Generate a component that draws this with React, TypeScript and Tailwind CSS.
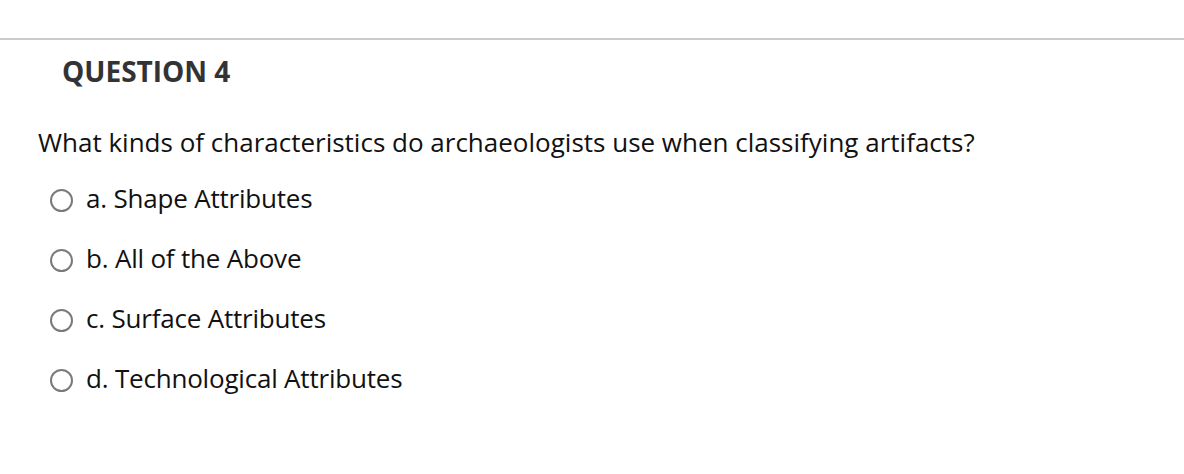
const options = [
  'a. Shape Attributes',
  'b. All of the Above',
  'c. Surface Attributes',
  'd. Technological Attributes',
];

export default function App() {
  return (
    <div className="w-[1184px] h-[474px] bg-white pt-[38px]" style={{ fontFamily: '"Open Sans", sans-serif' }}>
      <div className="h-[2px] bg-[#cccccc]" />
      <h2 className="ml-[62px] mt-[12px] text-[28px] font-bold text-[#333333] leading-[38px]">QUESTION 4</h2>
      <p className="ml-[38px] mt-[34px] text-[26px] text-[#111111] leading-[36px]">
        What kinds of characteristics do archaeologists use when classifying artifacts?
      </p>
      <div className="mt-[8px] flex flex-col">
        {options.map((opt) => (
          <label key={opt} className="flex items-center h-[60px] pl-[50px]">
            <span className="shrink-0 mt-[4px] w-[23px] h-[23px] rounded-full border-2 border-[#7a7a7a] bg-white" />
            <span className="ml-[13px] text-[26px] text-[#111111] tracking-[-0.2px]">{opt}</span>
          </label>
        ))}
      </div>
    </div>
  );
}
